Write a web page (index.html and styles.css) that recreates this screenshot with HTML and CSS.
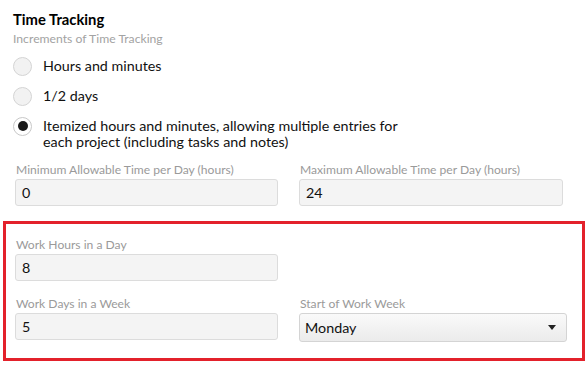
FILE: index.html
```html
<!DOCTYPE html>
<html>
<head>
<meta charset="utf-8">
<link rel="stylesheet" href="styles.css">
</head>
<body>
<div class="page">
  <div class="head">
    <div class="title">Time Tracking</div>
    <div class="subtitle">Increments of Time Tracking</div>
    <div class="radios">
      <div class="radio-row"><span class="radio"></span><span class="radio-text">Hours and minutes</span></div>
      <div class="radio-row"><span class="radio"></span><span class="radio-text">1/2 days</span></div>
      <div class="radio-row"><span class="radio checked"></span><span class="radio-text">Itemized hours and minutes, allowing multiple entries for<br>each project (including tasks and notes)</span></div>
    </div>
  </div>
  <div class="grid grid-top">
    <div class="field">
      <div class="label">Minimum Allowable Time per Day (hours)</div>
      <div class="input">0</div>
    </div>
    <div class="field">
      <div class="label">Maximum Allowable Time per Day (hours)</div>
      <div class="input">24</div>
    </div>
  </div>
  <div class="highlight">
    <div class="grid grid-box">
      <div class="field">
        <div class="label">Work Hours in a Day</div>
        <div class="input">8</div>
      </div>
      <div class="field"></div>
      <div class="field">
        <div class="label">Work Days in a Week</div>
        <div class="input">5</div>
      </div>
      <div class="field">
        <div class="label">Start of Work Week</div>
        <div class="select"><span>Monday</span><span class="caret"></span></div>
      </div>
    </div>
  </div>
</div>
</body>
</html>
```

FILE: styles.css
```css
html, body {
  margin: 0;
  padding: 0;
  background: #ffffff;
}
body {
  font-family: Lato, "Open Sans", Arial, sans-serif;
  color: #111;
}
.page {
  width: 588px;
  height: 367px;
  overflow: hidden;
}
.head {
  padding: 10px 13px 0 13px;
}
.title {
  font-weight: 700;
  font-size: 14.8px;
  line-height: 18px;
  color: #000;
}
.subtitle {
  margin-top: 3px;
  font-size: 12.2px;
  line-height: 16px;
  color: #a3a3a3;
}
.radios {
  margin-top: 4px;
}
.radio-row {
  display: flex;
  align-items: flex-start;
  padding: 7px 0;
  font-size: 14.3px;
  line-height: 16px;
  color: #111;
}
.radio {
  box-sizing: border-box;
  width: 19px;
  height: 19px;
  margin: -1.5px 0;
  border-radius: 50%;
  border: 1px solid #d4d4d4;
  background: #f2f2f2;
  flex: none;
  display: flex;
  align-items: center;
  justify-content: center;
}
.radio.checked {
  background: #ffffff;
  border-color: #c8c8c8;
}
.radio.checked::after {
  content: "";
  width: 10px;
  height: 10px;
  border-radius: 50%;
  background: #1a1a1a;
}
.radio-text {
  margin-left: 11px;
}
.grid {
  display: grid;
  column-gap: 21px;
}
.grid-top {
  padding: 5px 0 0 15px;
  grid-template-columns: 263px 264px;
}
.label {
  font-size: 12.1px;
  line-height: 16px;
  color: #9a9a9a;
  padding-left: 1px;
}
.input {
  box-sizing: border-box;
  margin-top: 1px;
  height: 27px;
  border: 1px solid #dcdcdc;
  border-radius: 3px;
  background: #f4f4f4;
  font-size: 14.3px;
  line-height: 25px;
  padding-left: 6px;
  color: #111;
}
.highlight {
  margin: 15px 0 0 3px;
  width: 582px;
  box-sizing: border-box;
  height: 140px;
  border: 3px solid #e3212b;
  padding: 13px 0 0 9px;
}
.grid-box {
  grid-template-columns: 263px 268px;
  row-gap: 15px;
}
.select {
  box-sizing: border-box;
  margin-top: 1px;
  height: 29px;
  border: 1px solid #d4d4d4;
  border-radius: 3px;
  background: linear-gradient(#fafafa, #ebebeb);
  font-size: 14.3px;
  line-height: 27px;
  padding: 0 10px 0 5px;
  color: #111;
  display: flex;
  justify-content: space-between;
  align-items: center;
}
.caret {
  width: 0;
  height: 0;
  border-left: 4.5px solid transparent;
  border-right: 4.5px solid transparent;
  border-top: 5px solid #222;
}
```
